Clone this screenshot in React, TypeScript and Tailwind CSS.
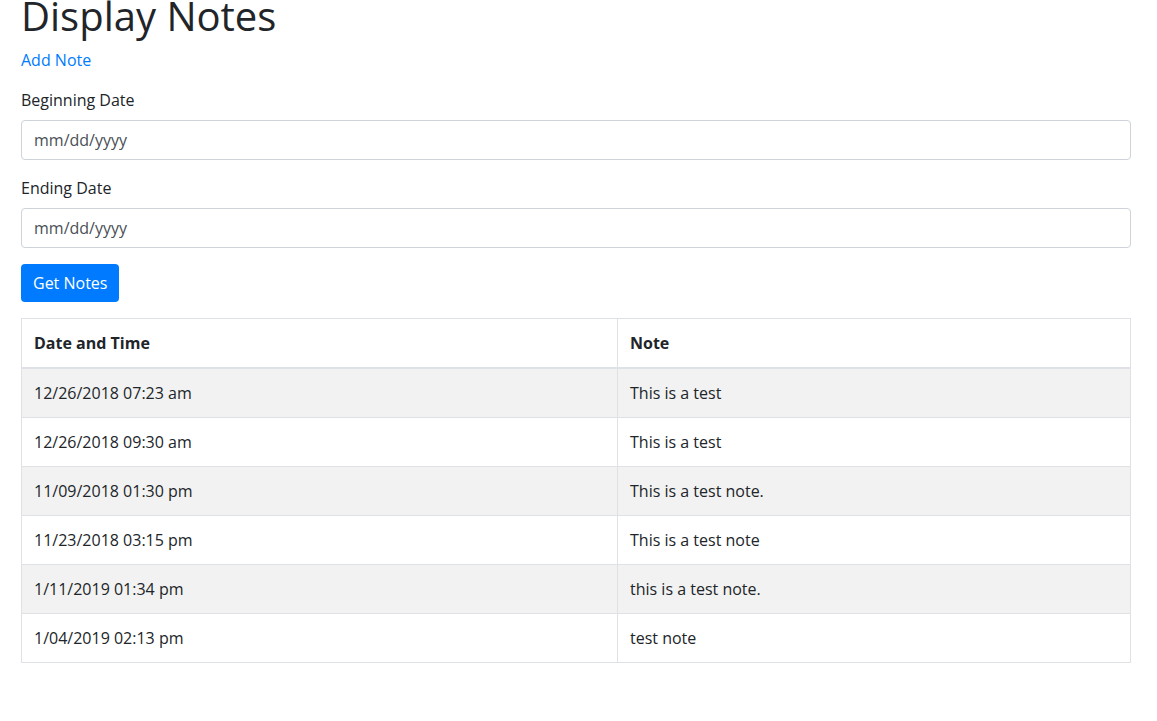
import React from 'react'

const notes = [
  { date: '12/26/2018 07:23 am', note: 'This is a test' },
  { date: '12/26/2018 09:30 am', note: 'This is a test' },
  { date: '11/09/2018 01:30 pm', note: 'This is a test note.' },
  { date: '11/23/2018 03:15 pm', note: 'This is a test note' },
  { date: '1/11/2019 01:34 pm', note: 'this is a test note.' },
  { date: '1/04/2019 02:13 pm', note: 'test note' },
]

function DateField({ label }: { label: string }) {
  return (
    <div className="mb-4">
      <label className="block mb-2 leading-6">{label}</label>
      <input
        type="text"
        placeholder="mm/dd/yyyy"
        className="block w-full h-10 px-3 border border-[#ced4da] rounded bg-white text-[#495057] placeholder:text-[#495057] outline-none"
      />
    </div>
  )
}

export default function App() {
  return (
    <div
      className="min-h-screen bg-white text-[#212529] text-base leading-6"
      style={{ fontFamily: '"Segoe UI", "Open Sans", "Noto Sans", sans-serif' }}
    >
      <div className="w-[1110px] ml-[21px] -mt-2">
        {/* Header */}
        <h1 className="text-[40px] leading-[48px] font-medium mb-2">Display Notes</h1>
        <a href="#" className="block text-[#007bff] leading-6 mb-4">Add Note</a>

        {/* Filters */}
        <DateField label="Beginning Date" />
        <DateField label="Ending Date" />
        <button className="h-[38px] px-3 rounded bg-[#007bff] text-white mb-4">Get Notes</button>

        {/* Notes table */}
        <table className="w-full border-collapse border border-[#dee2e6]">
          <thead>
            <tr>
              <th className="w-[596px] text-left font-bold p-3 border border-[#dee2e6] border-b-2">Date and Time</th>
              <th className="text-left font-bold p-3 border border-[#dee2e6] border-b-2">Note</th>
            </tr>
          </thead>
          <tbody>
            {notes.map((n, i) => (
              <tr key={i} className={i % 2 === 0 ? 'bg-[#f2f2f2]' : 'bg-white'}>
                <td className="p-3 border border-[#dee2e6]">{n.date}</td>
                <td className="p-3 border border-[#dee2e6]">{n.note}</td>
              </tr>
            ))}
          </tbody>
        </table>
      </div>
    </div>
  )
}
